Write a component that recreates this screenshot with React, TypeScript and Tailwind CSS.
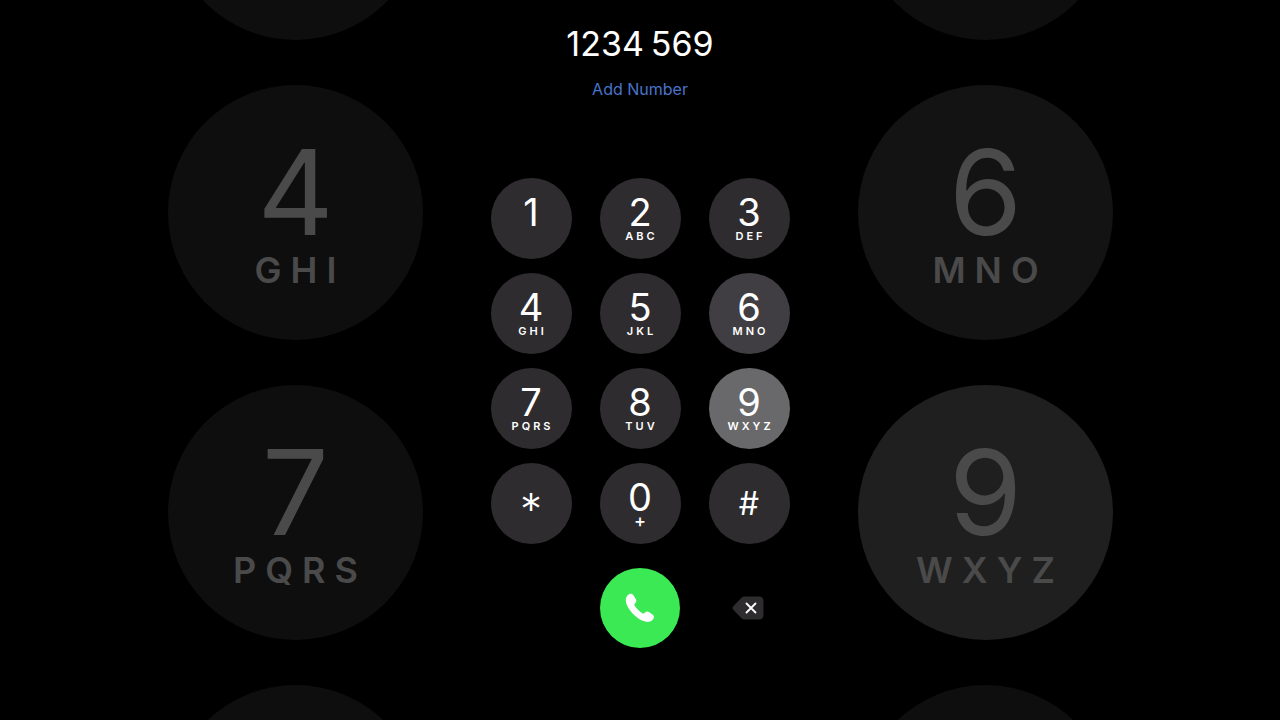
import React from "react";

interface DialKey {
  digit: string;
  letters?: string;
  color: string;
}

interface BackdropKey {
  digit: string;
  letters: string;
  color: string;
}

const KEYS: DialKey[] = [
  { digit: "1", letters: "", color: "bg-[#2e2c2f]" },
  { digit: "2", letters: "ABC", color: "bg-[#2e2c2f]" },
  { digit: "3", letters: "DEF", color: "bg-[#2e2c2f]" },
  { digit: "4", letters: "GHI", color: "bg-[#2e2c2f]" },
  { digit: "5", letters: "JKL", color: "bg-[#2e2c2f]" },
  { digit: "6", letters: "MNO", color: "bg-[#403e42]" },
  { digit: "7", letters: "PQRS", color: "bg-[#2e2c2f]" },
  { digit: "8", letters: "TUV", color: "bg-[#2e2c2f]" },
  { digit: "9", letters: "WXYZ", color: "bg-[#69686a]" },
  { digit: "*", color: "bg-[#2e2c2f]" },
  { digit: "0", letters: "+", color: "bg-[#2e2c2f]" },
  { digit: "#", color: "bg-[#2e2c2f]" },
];

const LEFT_BACKDROP: BackdropKey[] = [
  { digit: "", letters: "", color: "bg-[#0e0e0e]" },
  { digit: "4", letters: "GHI", color: "bg-[#0e0e0e]" },
  { digit: "7", letters: "PQRS", color: "bg-[#0e0e0e]" },
  { digit: "", letters: "", color: "bg-[#0e0e0e]" },
];

const RIGHT_BACKDROP: BackdropKey[] = [
  { digit: "", letters: "", color: "bg-[#0e0e0e]" },
  { digit: "6", letters: "MNO", color: "bg-[#131314]" },
  { digit: "9", letters: "WXYZ", color: "bg-[#1f1f1f]" },
  { digit: "", letters: "", color: "bg-[#0e0e0e]" },
];

const KeyLabel: React.FC<{ digit: string; letters?: string }> = ({ digit, letters }) => {
  if (digit === "*") {
    return <span className="pt-3 text-[44px] leading-10 font-light">*</span>;
  }
  if (digit === "#") {
    return <span className="pt-[2px] text-[32px] leading-10">#</span>;
  }
  return (
    <>
      <span className="text-[38px] leading-[38px]">{digit}</span>
      {letters === "+" ? (
        <span className="h-3 text-lg leading-[9px] font-medium">+</span>
      ) : (
        <span className="h-3 pl-[3px] text-[11px] leading-[10px] font-semibold tracking-[3px]">
          {letters}
        </span>
      )}
    </>
  );
};

const Backdrop: React.FC<{ keys: BackdropKey[] }> = ({ keys }) => {
  return (
    <div className="flex flex-col items-center justify-center gap-[45px] pt-[5px]">
      {keys.map((key, index) => (
        <div
          key={index}
          className={`flex size-[255px] shrink-0 flex-col items-center justify-center pb-[6px] text-[#4a4a4a] ${key.color} rounded-full`}
        >
          <span className="text-[118px] leading-[120px]">{key.digit}</span>
          <span className="pl-[9px] text-[36px] leading-9 font-semibold tracking-[9px]">
            {key.letters}
          </span>
        </div>
      ))}
    </div>
  );
};

const App: React.FC = () => {
  return (
    <div className="grid h-screen grid-cols-[1fr_406px_1fr] overflow-hidden bg-black font-['Inter',sans-serif] text-white">
      <div className="flex h-screen justify-end pr-[14px]" aria-hidden="true">
        <Backdrop keys={LEFT_BACKDROP} />
      </div>

      <main className="flex flex-col items-center pt-6">
        <output className="flex gap-[7px] text-[34px] leading-10">
          <span>1234</span>
          <span>569</span>
        </output>
        <button type="button" className="mt-[13px] text-base leading-6 text-[#4a74cc]">
          Add Number
        </button>

        <div className="mt-[77px] grid grid-cols-3 gap-x-7 gap-y-[14px]">
          {KEYS.map((key) => (
            <button
              key={key.digit}
              type="button"
              className={`flex size-[81px] flex-col items-center justify-center rounded-full pb-[2px] ${key.color}`}
            >
              <KeyLabel digit={key.digit} letters={key.letters} />
            </button>
          ))}
        </div>

        <div className="mt-6 grid grid-cols-3 items-center gap-x-[29px]">
          <button
            type="button"
            aria-label="Call"
            className="col-start-2 flex size-20 items-center justify-center rounded-full bg-[#3ae953]"
          >
            <svg width="30" height="30" viewBox="0 0 30 30" fill="currentColor">
              <path d="M3.2 1.7C4.8.5 7 .5 8.2 2.1L10.8 6C11.8 7.6 11.5 8.9 10.2 10.2C9.2 11.2 9.1 11.8 9.9 13C11.7 15.7 14.2 18.1 16.9 20C18.1 20.8 18.8 20.7 19.8 19.7C21.1 18.4 22.4 18.2 23.9 19.1L27.8 21.8C29.4 23 29.3 24.8 28.1 26.2C26.4 28.3 24 29.3 21.1 28.8C16.6 28 11.5 24.6 7.3 20.2C3.7 16.3 1 12 .8 7.6C.7 5.2 1.4 3.1 3.2 1.7Z" />
            </svg>
          </button>
          <button
            type="button"
            aria-label="Delete"
            className="flex size-20 items-center justify-center pr-[3px]"
          >
            <svg width="32" height="24" viewBox="0 0 32 24" fill="none">
              <path
                d="M9.5 1.8C10.6.8 11.4.5 13 .5H26.5C30 .5 31.5 2.1 31.5 5.5V18.5C31.5 21.9 30 23.5 26.5 23.5H13C11.4 23.5 10.6 23.2 9.5 22.2L1.5 14C.2 12.6.2 11.4 1.5 10Z"
                fill="#2e2c2f"
              />
              <path
                d="M14.5 7.5L23.5 16.5M23.5 7.5L14.5 16.5"
                stroke="white"
                strokeWidth="1.8"
                strokeLinecap="round"
              />
            </svg>
          </button>
        </div>
      </main>

      <div className="flex h-screen pl-[15px]" aria-hidden="true">
        <Backdrop keys={RIGHT_BACKDROP} />
      </div>
    </div>
  );
};

export default App;
